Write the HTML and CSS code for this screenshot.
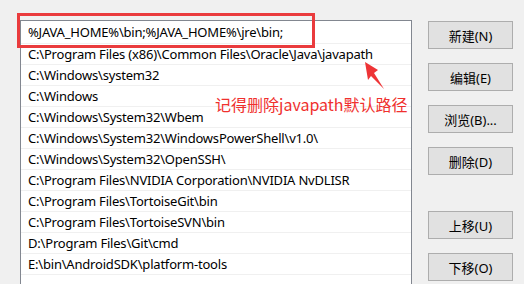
FILE: index.html
```html
<!DOCTYPE html>
<html lang="zh-CN">
<head>
    <meta charset="UTF-8">
    <title>编辑环境变量</title>
    <link rel="stylesheet" href="styles.css">
</head>
<body>

<div class="dialog">
    <div class="path-list">
        <div class="row row-edit">%JAVA_HOME%\bin;%JAVA_HOME%\jre\bin;</div>
        <div class="row">C:\Program Files (x86)\Common Files\Oracle\Java\javapath</div>
        <div class="row">C:\Windows\system32</div>
        <div class="row">C:\Windows</div>
        <div class="row">C:\Windows\System32\Wbem</div>
        <div class="row">C:\Windows\System32\WindowsPowerShell\v1.0\</div>
        <div class="row">C:\Windows\System32\OpenSSH\</div>
        <div class="row">C:\Program Files\NVIDIA Corporation\NVIDIA NvDLISR</div>
        <div class="row">C:\Program Files\TortoiseGit\bin</div>
        <div class="row">C:\Program Files\TortoiseSVN\bin</div>
        <div class="row">D:\Program Files\Git\cmd</div>
        <div class="row">E:\bin\AndroidSDK\platform-tools</div>
    </div>

    <div class="buttons">
        <button class="btn">新建(N)</button>
        <button class="btn">编辑(E)</button>
        <button class="btn">浏览(B)...</button>
        <button class="btn">删除(D)</button>
        <button class="btn btn-gap">上移(U)</button>
        <button class="btn">下移(O)</button>
    </div>
</div>

<!-- annotation drawn over the screenshot -->
<div class="mark-box"></div>
<div class="mark-text">记得删除javapath默认路径</div>
<svg class="mark-arrow" width="30" height="34" viewBox="0 0 30 34">
    <polygon points="5,2 18,10 14,13 24,29 11,16 8,20" fill="#ee3436"/>
</svg>

</body>
</html>
```

FILE: styles.css
```css
body {
    margin: 0;
    padding: 0;
    background-color: #f0f0f0;
    font-family: "Noto Sans", "Noto Sans CJK SC", sans-serif;
    font-size: 13px;
    color: #000;
    height: 284px;
    overflow: hidden;
}

.dialog {
    display: flex;
    align-items: flex-start;
    padding: 20px 0 0 20px;
}

.path-list {
    width: 390px;
    height: 270px;
    background-color: #fff;
    border: 1px solid #828790;
    border-bottom: none;
}

.row {
    height: 20px;
    line-height: 20px;
    padding-left: 7px;
    border-bottom: 1px solid #f0f0f0;
    white-space: nowrap;
    overflow: hidden;
    letter-spacing: -0.2px;
}

.row-edit {
    height: 22px;
    line-height: 22px;
}

.buttons {
    display: flex;
    flex-direction: column;
    margin-left: 16px;
    margin-top: 1px;
}

.btn {
    width: 85px;
    height: 28px;
    margin-bottom: 14px;
    padding: 0;
    background-color: #e1e1e1;
    border: 1px solid #adadad;
    font-family: "Noto Sans", "Noto Sans CJK SC", sans-serif;
    font-size: 13px;
    color: #000;
}

.btn-gap {
    margin-top: 22px;
}

.mark-box {
    position: absolute;
    left: 17px;
    top: 13px;
    width: 292px;
    height: 29px;
    border: 3px solid #ea3b3d;
}

.mark-text {
    position: absolute;
    left: 215px;
    top: 93px;
    font-family: "Noto Sans CJK SC", sans-serif;
    font-size: 16px;
    line-height: 22px;
    color: #f0302e;
}

.mark-arrow {
    position: absolute;
    left: 360px;
    top: 60px;
}
```
